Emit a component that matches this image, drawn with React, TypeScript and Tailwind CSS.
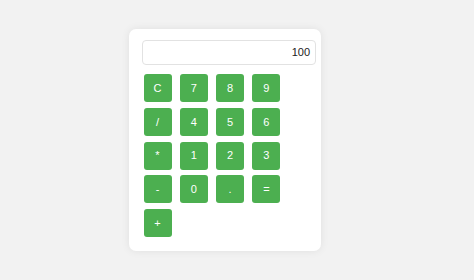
import React from "react";

const keys = ["C", "7", "8", "9", "/", "4", "5", "6", "*", "1", "2", "3", "-", "0", ".", "=", "+"];

export default function App() {
  return (
    <div className="w-[474px] h-[280px] bg-[#f2f2f2] pl-[129px] pt-[29px] font-['Liberation_Sans',Arial,sans-serif]">
      <div className="w-[192px] h-[222px] bg-white rounded-[7px] shadow-[0_0_8px_rgba(0,0,0,0.08)] pl-[13px] pt-[11px]">
        <div className="w-[174px] h-[25px] border border-[#e2e2e2] rounded-[4px] bg-white flex items-center justify-end pr-[5px] text-[11px] text-[#222]">
          100
        </div>
        <div className="mt-[9px] ml-[1.5px] grid grid-cols-[repeat(4,28px)] gap-x-[8.3px] gap-y-[5.8px]">
          {keys.map((k) => (
            <button
              key={k}
              className="w-[28px] h-[28px] bg-[#4caf50] text-white rounded-[3px] text-[11px] flex items-center justify-center"
            >
              {k}
            </button>
          ))}
        </div>
      </div>
    </div>
  );
}
